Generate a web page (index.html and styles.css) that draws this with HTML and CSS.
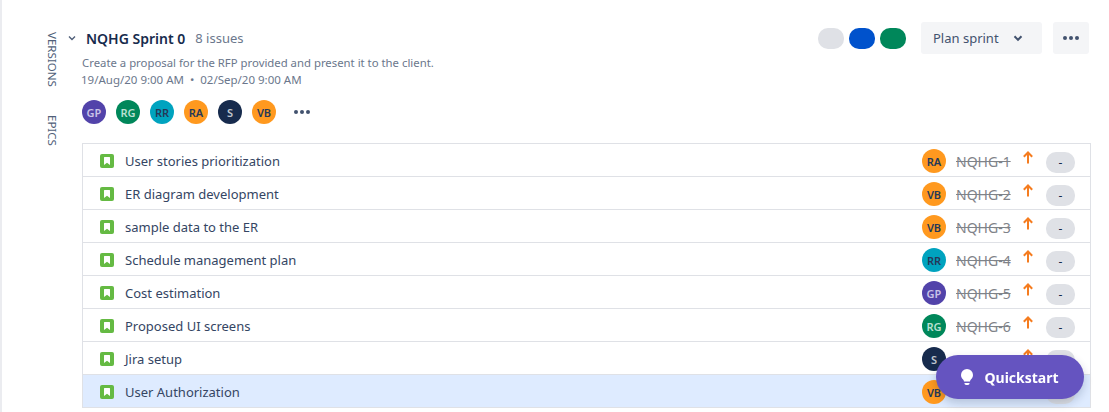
FILE: index.html
```html
<!DOCTYPE html>
<html lang="en">
<head>
    <meta charset="UTF-8">
    <meta name="viewport" content="width=device-width, initial-scale=1.0">
    <title>Backlog</title>
    <link rel="stylesheet" href="styles.css">
</head>
<body>

    <svg class="defs" width="0" height="0" aria-hidden="true">
        <symbol id="story" viewBox="0 0 14 14">
            <rect width="14" height="14" rx="2" fill="#65ba43"/>
            <path d="M4 3.500c0-.3.2-.5.5-.5h5c.3 0 .5.2.5.5v7.500L7 8.800 4 11z" fill="#fff"/>
        </symbol>
        <symbol id="high" viewBox="0 0 12 14">
            <path d="M6 1.500v11M1.800 5.800 6 1.500l4.200 4.300" fill="none" stroke="#f57c1f" stroke-width="2"/>
        </symbol>
    </svg>

    <div class="page">
        <!-- Onglets verticaux -->
        <div class="side-tabs">
            <span class="side-tab">VERSIONS</span>
            <span class="side-tab">EPICS</span>
        </div>

        <div class="sprint">
            <div class="sprint-header">
                <div class="sprint-info">
                    <div class="sprint-title">
                        <svg class="toggle" width="10" height="10" viewBox="0 0 10 10"><path d="M2 3.500 5 6.500l3-3" fill="none" stroke="#505f79" stroke-width="1.400"/></svg>
                        <strong>NQHG Sprint 0</strong>
                        <span class="issue-count">8 issues</span>
                    </div>
                    <p class="sprint-goal">Create a proposal for the RFP provided and present it to the client.</p>
                    <p class="sprint-dates">19/Aug/20 9:00 AM &nbsp;•&nbsp; 02/Sep/20 9:00 AM</p>
                    <div class="team">
                        <span class="avatar purple">GP</span>
                        <span class="avatar green">RG</span>
                        <span class="avatar teal">RR</span>
                        <span class="avatar orange">RA</span>
                        <span class="avatar navy">S</span>
                        <span class="avatar orange">VB</span>
                        <span class="dots team-dots"><i></i><i></i><i></i></span>
                    </div>
                </div>
                <div class="sprint-actions">
                    <span class="pill grey"></span>
                    <span class="pill blue"></span>
                    <span class="pill emerald"></span>
                    <button class="btn plan">Plan sprint
                        <svg width="12" height="12" viewBox="0 0 12 12"><path d="M2.500 4.300 6 7.800l3.500-3.500" fill="none" stroke="#42526e" stroke-width="2"/></svg>
                    </button>
                    <button class="btn more"><span class="dots"><i></i><i></i><i></i></span></button>
                </div>
            </div>

            <div class="issues">
                <div class="issue">
                    <svg class="type"><use href="#story"/></svg>
                    <span class="summary">User stories prioritization</span>
                    <span class="avatar orange">RA</span>
                    <span class="key">NQHG-1</span>
                    <svg class="priority"><use href="#high"/></svg>
                    <span class="points">-</span>
                </div>
                <div class="issue">
                    <svg class="type"><use href="#story"/></svg>
                    <span class="summary">ER diagram development</span>
                    <span class="avatar orange">VB</span>
                    <span class="key">NQHG-2</span>
                    <svg class="priority"><use href="#high"/></svg>
                    <span class="points">-</span>
                </div>
                <div class="issue">
                    <svg class="type"><use href="#story"/></svg>
                    <span class="summary">sample data to the ER</span>
                    <span class="avatar orange">VB</span>
                    <span class="key">NQHG-3</span>
                    <svg class="priority"><use href="#high"/></svg>
                    <span class="points">-</span>
                </div>
                <div class="issue">
                    <svg class="type"><use href="#story"/></svg>
                    <span class="summary">Schedule management plan</span>
                    <span class="avatar teal">RR</span>
                    <span class="key">NQHG-4</span>
                    <svg class="priority"><use href="#high"/></svg>
                    <span class="points">-</span>
                </div>
                <div class="issue">
                    <svg class="type"><use href="#story"/></svg>
                    <span class="summary">Cost estimation</span>
                    <span class="avatar purple">GP</span>
                    <span class="key">NQHG-5</span>
                    <svg class="priority"><use href="#high"/></svg>
                    <span class="points">-</span>
                </div>
                <div class="issue">
                    <svg class="type"><use href="#story"/></svg>
                    <span class="summary">Proposed UI screens</span>
                    <span class="avatar green">RG</span>
                    <span class="key">NQHG-6</span>
                    <svg class="priority"><use href="#high"/></svg>
                    <span class="points">-</span>
                </div>
                <div class="issue">
                    <svg class="type"><use href="#story"/></svg>
                    <span class="summary">Jira setup</span>
                    <span class="avatar navy">S</span>
                    <span class="key"></span>
                    <svg class="priority"><use href="#high"/></svg>
                    <span class="points">-</span>
                </div>
                <div class="issue selected">
                    <svg class="type"><use href="#story"/></svg>
                    <span class="summary">User Authorization</span>
                    <span class="avatar orange">VB</span>
                    <span class="key"></span>
                    <svg class="priority"><use href="#high"/></svg>
                    <span class="points">-</span>
                </div>
            </div>
        </div>
    </div>

    <!-- Bouton flottant -->
    <button class="quickstart">
        <svg width="16" height="18" viewBox="0 0 16 18"><path d="M8 1a6 6 0 0 0-6 6c0 2.200 1.100 3.500 2.100 4.600.6.700.9 1.200.9 1.900h6c0-.7.300-1.200.9-1.900C12.900 10.500 14 9.200 14 7a6 6 0 0 0-6-6z" fill="#fff"/><path d="M5.500 15h5v.6c0 .8-.7 1.400-1.500 1.400H7c-.8 0-1.500-.6-1.500-1.400z" fill="#fff"/></svg>
        Quickstart
    </button>

</body>
</html>
```

FILE: styles.css
```css
html, body {
    height: 100%;
}

body {
    font-family: "Noto Sans", "Open Sans", sans-serif;
    background-color: #fff;
    color: #42526e;
    margin: 0;
    overflow: hidden;
}

.defs {
    display: block;
    height: 0;
}

.page {
    display: flex;
    height: 412px;
    overflow: hidden;
    border-left: 2px solid #ebecf0;
    padding: 28px 18px 0 42px;
    box-sizing: border-box;
}

.side-tabs {
    width: 38px;
    flex: none;
    display: flex;
    flex-direction: column;
    align-items: flex-start;
    gap: 28px;
    padding-top: 4px;
}

.side-tab {
    writing-mode: vertical-rl;
    font-size: 11.500px;
    line-height: 16px;
    color: #505f79;
}

.sprint {
    flex: 1;
    min-width: 0;
}

.sprint-header {
    display: flex;
    justify-content: space-between;
    height: 115px;
}

.sprint-title {
    display: flex;
    align-items: center;
    height: 20px;
    margin-left: -15px;
    font-size: 14px;
    color: #172b4d;
}

.toggle {
    margin-right: 9px;
}

.sprint-title strong {
    font-weight: 600;
}

.issue-count {
    margin-left: 10px;
    font-size: 13px;
    color: #6b778c;
}

.sprint-goal,
.sprint-dates {
    margin: 0;
    color: #6b778c;
}

.sprint-goal {
    margin-top: 6px;
    font-size: 11.350px;
    line-height: 17px;
}

.sprint-dates {
    margin-left: -1px;
    font-size: 11.500px;
    line-height: 17px;
}

.team {
    display: flex;
    align-items: center;
    gap: 10px;
    margin-top: 12px;
}

.team-dots {
    margin-left: 8px;
}

.avatar {
    width: 24px;
    height: 24px;
    flex: none;
    border-radius: 50%;
    display: flex;
    align-items: center;
    justify-content: center;
    font-size: 11px;
    font-weight: 600;
}

.purple { background-color: #5243aa; color: #c9c4e8; }
.green { background-color: #00875a; color: #b9e0d2; }
.teal { background-color: #00a3bf; color: #253858; }
.orange { background-color: #ff991f; color: #253858; }
.navy { background-color: #172b4d; color: #c1c7d0; }

.dots {
    display: inline-flex;
    gap: 2px;
}

.dots i {
    width: 4px;
    height: 4px;
    border-radius: 50%;
    background-color: #42526e;
}

.sprint-actions {
    display: flex;
    align-items: flex-start;
    margin-top: -6px;
    margin-right: 2px;
}

.pill {
    width: 26px;
    height: 21px;
    border-radius: 10px;
    margin-top: 6px;
    margin-right: 5px;
}

.grey { background-color: #dfe1e6; }
.blue { background-color: #0052cc; }
.emerald { background-color: #00875a; }

.btn {
    height: 32px;
    border: none;
    border-radius: 3px;
    background-color: #f4f5f7;
    color: #42526e;
    font-family: inherit;
    font-size: 13px;
    display: flex;
    align-items: center;
    justify-content: center;
    padding: 0;
}

.plan {
    width: 121px;
    margin-left: 10px;
    justify-content: flex-start;
    padding-left: 12px;
    gap: 13px;
}

.more {
    width: 36px;
    margin-left: 11px;
}

.issues {
    border: 1px solid #dfe1e6;
    border-bottom: none;
}

.issue {
    display: flex;
    align-items: center;
    height: 30px;
    border-bottom: 1px solid #dfe1e6;
    padding: 2px 15px 0 17px;
}

.issue.selected {
    background-color: #deebff;
}

.type {
    width: 14px;
    height: 14px;
    flex: none;
    margin-right: 11px;
}

.summary {
    flex: 1;
    font-size: 13px;
    color: #344563;
}

.key {
    width: 55px;
    flex: none;
    margin-left: 10px;
    font-size: 14px;
    white-space: nowrap;
    color: #7f8389;
    text-decoration: line-through;
}

.priority {
    width: 12px;
    height: 14px;
    flex: none;
    margin-left: 11px;
    margin-top: -6px;
}

.points {
    width: 29px;
    height: 21px;
    flex: none;
    margin-left: 12px;
    margin-top: 2px;
    border-radius: 10px;
    background-color: #dfe1e6;
    color: #172b4d;
    font-size: 12px;
    display: flex;
    align-items: center;
    justify-content: center;
}

.quickstart {
    position: fixed;
    left: 936px;
    top: 355px;
    width: 148px;
    height: 44px;
    border: none;
    border-radius: 22px;
    background-color: #6554c0;
    color: #fff;
    font-family: inherit;
    font-size: 14px;
    font-weight: 700;
    display: flex;
    align-items: center;
    justify-content: center;
    gap: 9px;
    padding: 0 8px 0 6px;
    box-shadow: 0 4px 10px rgba(9, 30, 66, 0.2);
}
```
